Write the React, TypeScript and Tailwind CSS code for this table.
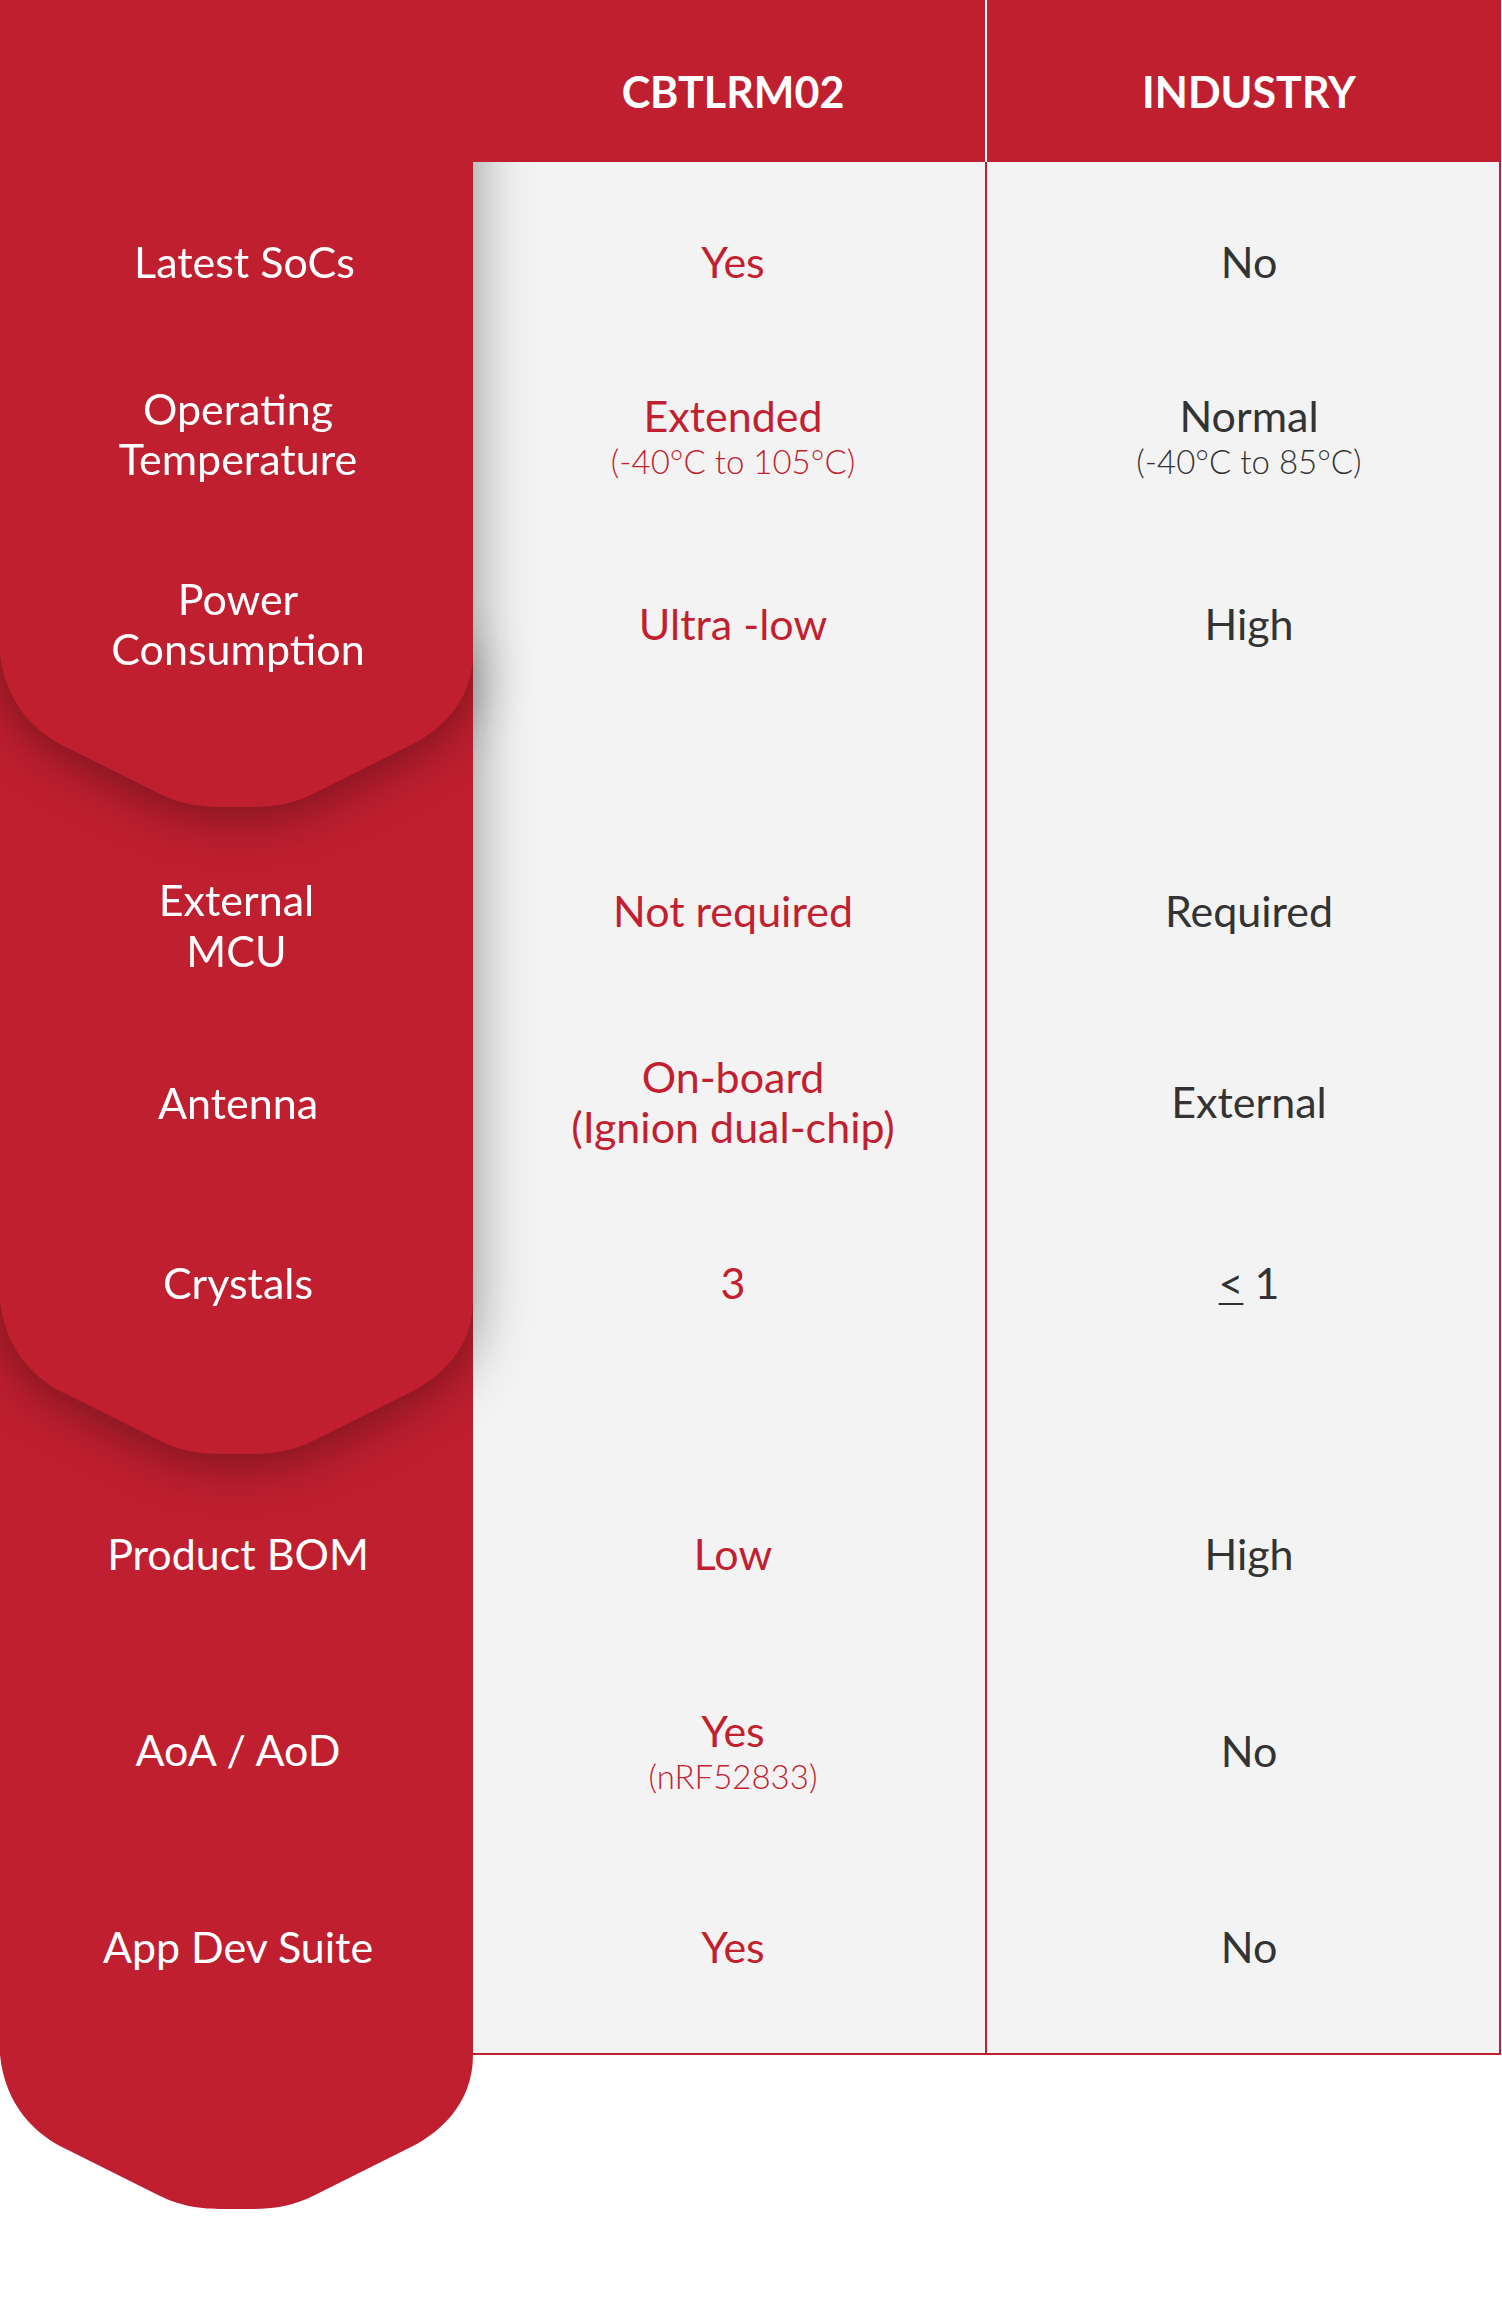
import React from "react";

const CHEVRON =
  "M0 0 H473 V5 C473 55 438 85 405 100 L315 145 C285 160 262 159 236.5 159 C211 159 188 160 158 145 L68 100 C35 85 5 55 0 5 Z";

function Chevron() {
  return (
    <svg className="block w-[473px] h-[160px]" viewBox="0 0 473 160" width={473} height={160}>
      <path d={CHEVRON} fill="#c01f2f" />
    </svg>
  );
}

function Main({ children, red }: { children: React.ReactNode; red?: boolean }) {
  return (
    <div className={red ? "text-[43px] leading-[50px] text-[#c21f31]" : "text-[43px] leading-[50px] text-[#333333]"}>
      {children}
    </div>
  );
}

function Sub({ children, red }: { children: React.ReactNode; red?: boolean }) {
  return (
    <div
      className={
        red
          ? "text-[33px] leading-[41px] font-light text-[#c21f31]"
          : "text-[33px] leading-[41px] font-light text-[#333333]"
      }
    >
      {children}
    </div>
  );
}

type Row = { h: string; pad: string; a: React.ReactNode; b: React.ReactNode };

const rows: Row[] = [
  { h: "h-[187px]", pad: "pt-[13px]", a: <Main red>Yes</Main>, b: <Main>No</Main> },
  {
    h: "h-[181px]",
    pad: "pb-[6px]",
    a: (
      <>
        <Main red>Extended</Main>
        <Sub red>(-40°C to 105°C)</Sub>
      </>
    ),
    b: (
      <>
        <Main>Normal</Main>
        <Sub>(-40°C to 85°C)</Sub>
      </>
    ),
  },
  { h: "h-[238px]", pad: "pb-[50px]", a: <Main red>Ultra -low</Main>, b: <Main>High</Main> },
  { h: "h-[238px]", pad: "pt-[48px]", a: <Main red>Not required</Main>, b: <Main>Required</Main> },
  {
    h: "h-[186px]",
    pad: "pt-[6px]",
    a: (
      <>
        <Main red>On-board</Main>
        <Main red>(Ignion dual-chip)</Main>
      </>
    ),
    b: <Main>External</Main>,
  },
  {
    h: "h-[226px]",
    pad: "pb-[44px]",
    a: <Main red>3</Main>,
    b: (
      <Main>
        <span className="underline decoration-[1.5px] underline-offset-[4px]">&lt;</span> 1
      </Main>
    ),
  },
  { h: "h-[235px]", pad: "pt-[37px]", a: <Main red>Low</Main>, b: <Main>High</Main> },
  {
    h: "h-[196px]",
    pad: "pt-0",
    a: (
      <>
        <Main red>Yes</Main>
        <Sub red>(nRF52833)</Sub>
      </>
    ),
    b: <Main>No</Main>,
  },
  { h: "h-[204px]", pad: "pb-[8px]", a: <Main red>Yes</Main>, b: <Main>No</Main> },
];

function Label({ children, cls }: { children: React.ReactNode; cls?: string }) {
  return <div className={"text-[43px] leading-[50px] text-white text-center " + (cls ?? "pl-[3px]")}>{children}</div>;
}

export default function App() {
  return (
    <div className="w-[1502px] h-[2302px] bg-white flex items-start [font-family:Lato,'Open_Sans',sans-serif]">
      {/* Left column */}
      <div className="relative z-10 w-[473px] shrink-0 flex flex-col">
        {/* Group 1 */}
        <div className="relative z-30 [filter:drop-shadow(0_5px_28px_rgba(0,0,0,0.42))]">
          <div className="relative z-[1] h-[648px] bg-[#c01f2f] flex flex-col items-center pt-[237px]">
            <Label cls="pl-[16px]">Latest SoCs</Label>
            <Label cls="mt-[97px] pl-[3px]">
              Operating
              <br />
              Temperature
            </Label>
            <Label cls="mt-[90px] pl-[3px]">
              Power
              <br />
              Consumption
            </Label>
          </div>
          <Chevron />
        </div>
        {/* Group 2 */}
        <div className="relative z-20 -mt-[160px] [filter:drop-shadow(0_5px_28px_rgba(0,0,0,0.42))]">
          <div className="relative z-[1] h-[647px] bg-[#c01f2f] flex flex-col items-center pt-[226px]">
            <Label cls="leading-[51px]">
              External
              <br />
              MCU
            </Label>
            <Label cls="mt-[102px] pl-[3px]">Antenna</Label>
            <Label cls="mt-[130px] pl-[3px]">Crystals</Label>
          </div>
          <Chevron />
        </div>
        {/* Group 3 */}
        <div className="relative z-10 -mt-[160px]">
          <div className="relative z-[1] h-[755px] bg-[#c01f2f] flex flex-col items-center pt-[234px]">
            <Label>Product BOM</Label>
            <Label cls="mt-[146px] pl-[3px]">AoA / AoD</Label>
            <Label cls="mt-[147px] pl-[3px]">App Dev Suite</Label>
          </div>
          <Chevron />
        </div>
      </div>

      {/* Table */}
      <div className="w-[1028px] shrink-0 border-r-2 border-[#c01f2f]">
        <div className="relative z-20 h-[162px] bg-[#c01f2f] flex text-white text-[43px] leading-[50px] font-bold">
          <div className="w-[514px] border-r-2 border-white flex justify-center pt-[67px] pl-[8px]">CBTLRM02</div>
          <div className="flex-1 flex justify-center pt-[67px] pl-[12px]">INDUSTRY</div>
        </div>
        <div className="bg-[#f3f3f3] border-b-2 border-[#c01f2f] flex flex-col">
          {rows.map((r, i) => (
            <div key={i} className={"flex " + r.h}>
              <div
                className={
                  "w-[514px] border-r-2 border-[#c01f2f] flex flex-col items-center justify-center pl-[8px] text-center " +
                  r.pad
                }
              >
                {r.a}
              </div>
              <div className={"flex-1 flex flex-col items-center justify-center pl-[12px] text-center " + r.pad}>
                {r.b}
              </div>
            </div>
          ))}
        </div>
      </div>
    </div>
  );
}
